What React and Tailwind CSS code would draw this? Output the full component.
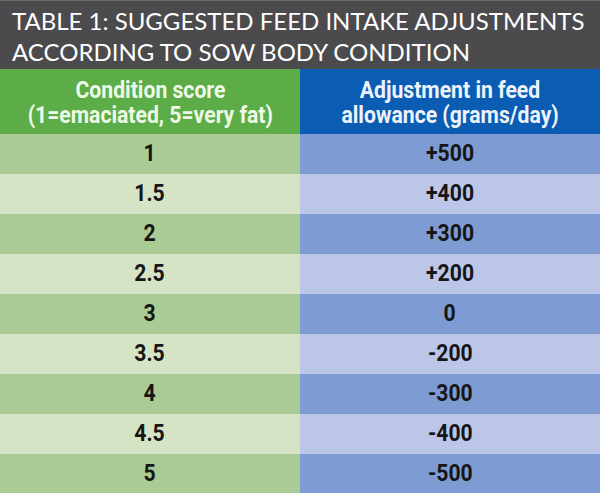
const rows = [
  ["1", "+500"],
  ["1.5", "+400"],
  ["2", "+300"],
  ["2.5", "+200"],
  ["3", "0"],
  ["3.5", "-200"],
  ["4", "-300"],
  ["4.5", "-400"],
  ["5", "-500"],
];

const narrow = { fontFamily: 'Roboto, "Liberation Sans", sans-serif' };

function Squeeze({ children }) {
  return <span className="inline-block whitespace-nowrap scale-x-[0.92]">{children}</span>;
}

export default function App() {
  return (
    <div className="w-[600px] h-[493px] overflow-hidden bg-white">
      {/* titel */}
      <div
        className="h-[69px] bg-[#4b4b4d] border-t border-[#6b6b6d] px-[12px] pt-[4px] text-white text-[24px] leading-[31px] whitespace-nowrap"
        style={{ fontFamily: 'Lato, "Noto Sans", sans-serif' }}
      >
        <div>TABLE 1: SUGGESTED FEED INTAKE ADJUSTMENTS</div>
        <div>ACCORDING TO SOW BODY CONDITION</div>
      </div>

      {/* header */}
      <div className="grid grid-cols-[300px_300px] h-[65px] font-bold text-[23px] leading-[25px]" style={narrow}>
        <div className="bg-[#5cad48] text-[#eef8e6] flex flex-col items-center justify-center pt-[2px]">
          <Squeeze>Condition score</Squeeze>
          <Squeeze>(1=emaciated, 5=very fat)</Squeeze>
        </div>
        <div className="bg-[#0a5db3] text-[#eef3fb] flex flex-col items-center justify-center pt-[2px]">
          <Squeeze>Adjustment in feed</Squeeze>
          <Squeeze>allowance (grams/day)</Squeeze>
        </div>
      </div>

      {/* rijen */}
      {rows.map(([score, adj], i) => (
        <div
          key={score}
          className="grid grid-cols-[300px_300px] h-[40px] font-bold text-[23px] text-[#161616]"
          style={narrow}
        >
          <div className={(i % 2 === 0 ? "bg-[#abcb94]" : "bg-[#d6e4c6]") + " flex items-center justify-center"}>
            <Squeeze>{score}</Squeeze>
          </div>
          <div className={(i % 2 === 0 ? "bg-[#7f9bd3]" : "bg-[#bcc6e9]") + " flex items-center justify-center"}>
            <Squeeze>{adj}</Squeeze>
          </div>
        </div>
      ))}
    </div>
  );
}
